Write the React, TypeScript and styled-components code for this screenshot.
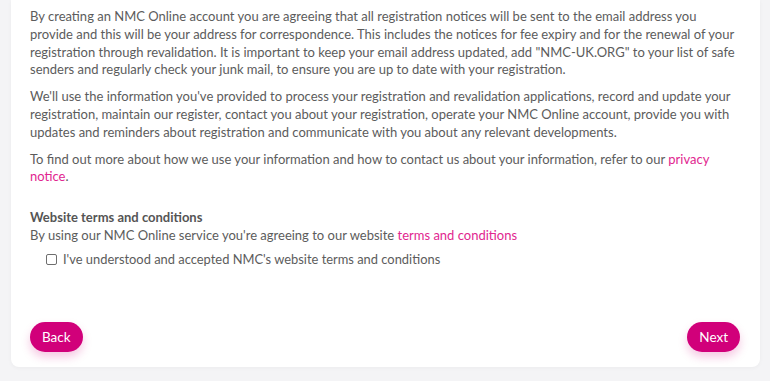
import React from 'react';
import styled, { createGlobalStyle } from 'styled-components';

const GlobalStyle = createGlobalStyle`
  html, body {
    margin: 0;
    padding: 0;
    background: #f4f4f6;
  }
  body {
    font-family: 'Lato', 'Open Sans', sans-serif;
    -webkit-font-smoothing: antialiased;
  }
`;

const Page = styled.div`
  padding: 0 10px 14px 11px;
`;

const Card = styled.section`
  background: #ffffff;
  border-radius: 0 0 8px 8px;
  box-shadow: 0 1px 4px rgba(0, 0, 0, 0.04);
  padding: 8px 20px 15px 19px;
  display: flex;
  flex-direction: column;
`;

const Paragraph = styled.p`
  margin: 0 0 9px;
  font-size: 13px;
  line-height: 17.8px;
  color: #5c5c5c;
`;

const Link = styled.a`
  color: #e1268f;
  text-decoration: none;
`;

const Section = styled.div`
  margin-top: 13px;
  display: flex;
  flex-direction: column;
`;

const Heading = styled.h3`
  margin: 0;
  font-size: 13px;
  line-height: 18px;
  font-weight: 700;
  color: #555555;
`;

const Line = styled.div`
  font-size: 13px;
  line-height: 18px;
  color: #5c5c5c;
`;

const CheckRow = styled.label`
  display: flex;
  align-items: center;
  gap: 6px;
  margin: 6px 0 0 16px;
  font-size: 12.9px;
  line-height: 18px;
  color: #5c5c5c;
`;

const Box = styled.input`
  appearance: none;
  width: 11px;
  height: 11px;
  margin: 0;
  border: 1px solid #6e6e6e;
  border-radius: 2px;
  background: #fff;
`;

const Actions = styled.div`
  margin-top: 54px;
  display: flex;
  justify-content: space-between;
  align-items: center;
`;

const Button = styled.button`
  height: 30px;
  padding: 0 12px;
  border: none;
  border-radius: 15px;
  background: #d1007a;
  color: #fff;
  font-family: 'Lato', 'Open Sans', sans-serif;
  font-size: 13.5px;
  box-shadow: 0 5px 10px rgba(209, 0, 122, 0.22);
  cursor: pointer;
`;

const App = () => (
  <>
    <GlobalStyle />
    <Page>
      <Card>
        <Paragraph>
          By creating an NMC Online account you are agreeing that all registration notices will be sent to the email
          address you provide and this will be your address for correspondence. This includes the notices for fee
          expiry and for the renewal of your registration through revalidation. It is important to keep your email
          address updated, add "NMC-UK.ORG" to your list of safe senders and regularly check your junk mail, to ensure
          you are up to date with your registration.
        </Paragraph>
        <Paragraph>
          We'll use the information you've provided to process your registration and revalidation applications, record
          and update your registration, maintain our register, contact you about your registration, operate your NMC
          Online account, provide you with updates and reminders about registration and communicate with you about any
          relevant developments.
        </Paragraph>
        <Paragraph>
          To find out more about how we use your information and how to contact us about your information, refer to our{' '}
          <Link href="#">privacy notice</Link>.
        </Paragraph>

        <Section>
          <Heading>Website terms and conditions</Heading>
          <Line>
            By using our NMC Online service you're agreeing to our website <Link href="#">terms and conditions</Link>
          </Line>
          <CheckRow>
            <Box type="checkbox" />
            I've understood and accepted NMC's website terms and conditions
          </CheckRow>
        </Section>

        <Actions>
          <Button>Back</Button>
          <Button>Next</Button>
        </Actions>
      </Card>
    </Page>
  </>
);

export default App;
